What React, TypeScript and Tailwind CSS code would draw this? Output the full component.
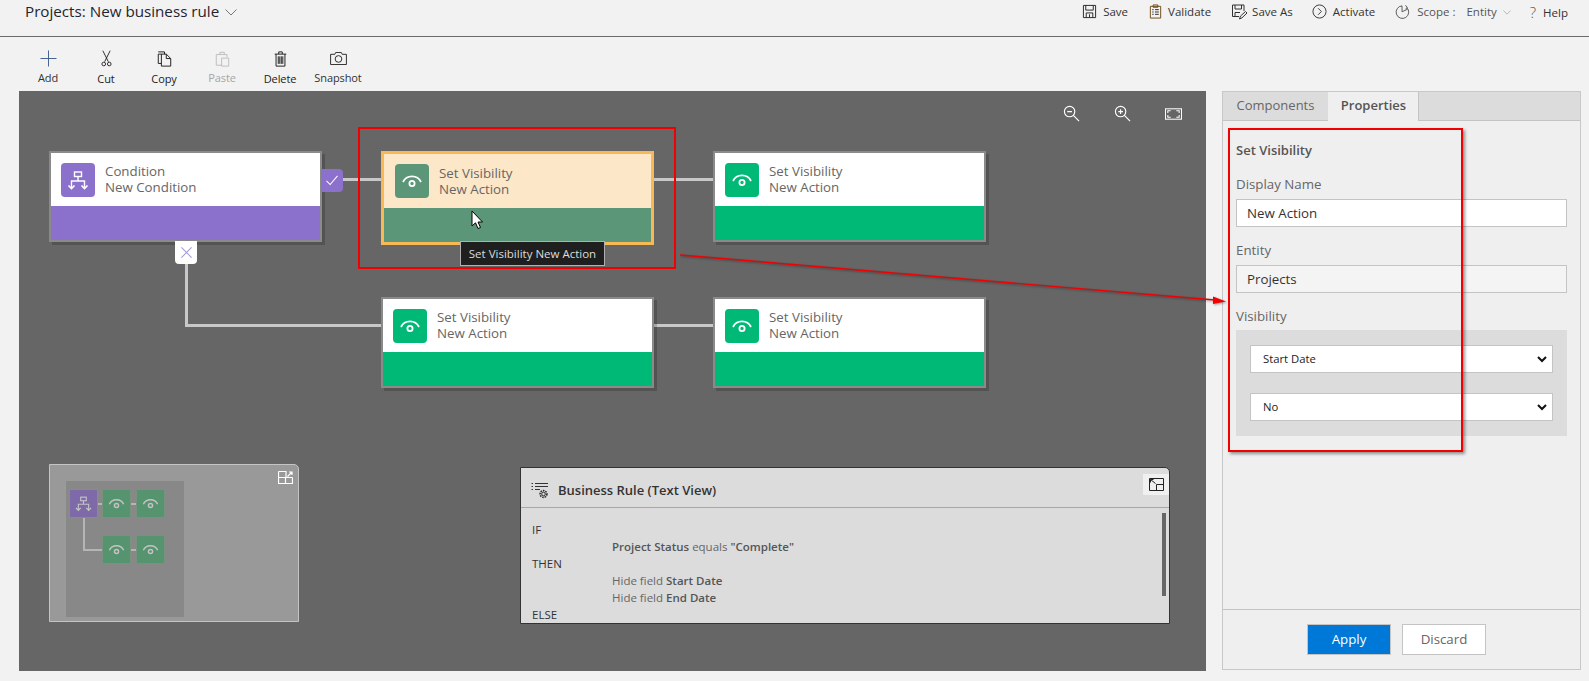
import * as React from "react";

const Eye: React.FC<{ className?: string }> = ({ className }) => (
  <svg viewBox="0 0 34 34" className={className} fill="none" stroke="currentColor" strokeWidth="1.8">
    <path d="M8 18 C11.5 10.5 22.5 10.5 26 18" />
    <circle cx="17" cy="19.5" r="2.6" />
  </svg>
);

const OrgIcon: React.FC<{ className?: string }> = ({ className }) => (
  <svg viewBox="0 0 34 34" className={className} fill="none" stroke="currentColor" strokeWidth="1.4">
    <rect x="13.5" y="9" width="7" height="4.5" />
    <path d="M17 13.5 V18 M10.5 25 V18 H23.5 V25" />
    <path d="M7.5 22.5 L10.5 25.5 L13.5 22.5 M20.5 22.5 L23.5 25.5 L26.5 22.5" strokeWidth="1.6" />
  </svg>
);

const SaveIcon = () => (
  <svg viewBox="0 0 16 16" className="w-[15px] h-[15px]" fill="none" stroke="#222" strokeWidth="1">
    <path d="M1.5 1.5 H14.5 V14.5 H1.5 Z M4 1.5 V6.5 H12 V1.5 M4.5 14.5 V9.5 H11.5 V14.5 M8 11 V14" />
  </svg>
);

const ValidateIcon = () => (
  <svg viewBox="0 0 16 16" className="w-[15px] h-[15px]" fill="none" stroke="#6b4a12" strokeWidth="1">
    <path d="M2.5 2.5 H13.5 V15 H2.5 Z M5.5 1 H10.5 V3.5 H5.5 Z" />
    <path d="M4.5 6 H6 M7.5 6 H11.5 M4.5 8.5 H6 M7.5 8.5 H11.5 M4.5 11 H6 M7.5 11 H11.5" stroke="#222" />
  </svg>
);

const SaveAsIcon = () => (
  <svg viewBox="0 0 17 16" className="w-[17px] h-[16px]" fill="none" stroke="#333" strokeWidth="1">
    <path d="M8 12.5 H1.5 V1 H13 V7 M4 1 V5 H10.5 V1 M4 12.5 V8.5 H9" />
    <path d="M8.5 15 L9.5 12 L14.5 7.5 L16 9 L11 13.8 Z" />
  </svg>
);

const ActivateIcon = () => (
  <svg viewBox="0 0 16 16" className="w-[15px] h-[15px]" fill="none" stroke="#333" strokeWidth="1">
    <circle cx="8" cy="8" r="7" />
    <path d="M6.5 4.5 L10 8 L6.5 11.5" />
  </svg>
);

const ScopeIcon = () => (
  <svg viewBox="0 0 16 16" className="w-[15px] h-[15px]" fill="none" stroke="#555" strokeWidth="1">
    <path d="M12.5 3.8 A6.7 6.7 0 1 1 7.5 2 V8.3 L13.5 5.5" />
    <path d="M11 1.5 L13.2 3.4 L11.3 5.6" />
  </svg>
);

const Chevron: React.FC<{ className: string; stroke?: string }> = ({ className, stroke = "#777" }) => (
  <svg viewBox="0 0 12 7" className={className} fill="none" stroke={stroke} strokeWidth="1">
    <path d="M0.5 0.5 L6 6 L11.5 0.5" />
  </svg>
);

const toolItems: { label: string; muted?: boolean; low?: boolean; icon: React.ReactNode }[] = [
  {
    label: "Add",
    icon: (
      <svg viewBox="0 0 18 18" className="w-[17px] h-[17px]" stroke="#3d5a8c" strokeWidth="1">
        <path d="M9 0.5 V17.5 M0.5 9 H17.5" />
      </svg>
    ),
  },
  {
    label: "Cut",
    low: true,
    icon: (
      <svg viewBox="0 0 12 18" className="w-[11px] h-[17px]" fill="none" stroke="#222" strokeWidth="1">
        <path d="M2 0.5 L8 12.5 M10 0.5 L4 12.5" />
        <circle cx="3" cy="15" r="2" />
        <circle cx="9" cy="15" r="2" />
      </svg>
    ),
  },
  {
    label: "Copy",
    low: true,
    icon: (
      <svg viewBox="0 0 16 18" className="w-[15px] h-[16px]" fill="none" stroke="#222" strokeWidth="1.1">
        <path d="M4.5 3.5 H1 V14 H4.5" />
        <path d="M1 1 H8 V3.5 M4.5 3.5 H10 L15 8.5 V17 H4.5 Z M10 3.5 V8.5 H15" />
      </svg>
    ),
  },
  {
    label: "Paste",
    muted: true,
    icon: (
      <svg viewBox="0 0 16 18" className="w-[15px] h-[16px]" fill="none" stroke="#bdbdbd" strokeWidth="1.1">
        <path d="M5 4 H1 V16 H7 M5 1.5 H10 V4 H5 Z M10 4 H13 V7 M7 8 H15 V17 H7 Z" />
      </svg>
    ),
  },
  {
    label: "Delete",
    low: true,
    icon: (
      <svg viewBox="0 0 14 18" className="w-[13px] h-[16px]" fill="none" stroke="#222" strokeWidth="1.1">
        <path d="M0.5 3.5 H13.5 M5 3.5 V1 H9 V3.5 M2 3.5 V17 H12 V3.5 M4.5 6 V14.5 M6.2 6 V14.5 M7.9 6 V14.5 M9.6 6 V14.5" />
      </svg>
    ),
  },
  {
    label: "Snapshot",
    icon: (
      <svg viewBox="0 0 18 14" className="w-[17px] h-[13px]" fill="none" stroke="#222" strokeWidth="1">
        <path d="M0.5 2.5 H5 L6 0.5 H12 L13 2.5 H17.5 V13.5 H0.5 Z" />
        <circle cx="9" cy="7.5" r="3.6" />
      </svg>
    ),
  },
];

const Toolbar: React.FC = () => (
  <div className="flex h-[54px] pl-[19px] pt-[12px]">
    {toolItems.map((t) => (
      <div key={t.label} className="w-[58px] flex flex-col items-center">
        <div className="h-[19px] flex items-center justify-center">{t.icon}</div>
        <span
          className={`text-[11px] leading-[16px] tracking-[-0.01em] whitespace-nowrap ${t.low ? "mt-[3px] text-[#222]" : "mt-[2px]"} ${
            t.muted ? "text-[#a6a6a6]" : t.low ? "" : "text-[#333]"
          }`}
        >
          {t.label}
        </span>
      </div>
    ))}
  </div>
);

const Header: React.FC = () => (
  <header className="h-[37px] border-b border-[#6b6b6b] flex items-start pl-[25px] pr-[21px]">
    <h1 className="text-[15.2px] leading-[23px] font-medium text-[#1f2430] whitespace-nowrap">Projects: New business rule</h1>
    <Chevron className="w-[12px] h-[7px] ml-[6px] mt-[9px]" />
    <div className="ml-auto flex items-center h-[23px] text-[11.5px] text-[#333] whitespace-nowrap">
      <SaveIcon />
      <span className="ml-[6px]">Save</span>
      <span className="ml-[20px]"><ValidateIcon /></span>
      <span className="ml-[5px]">Validate</span>
      <span className="ml-[20px]"><SaveAsIcon /></span>
      <span className="ml-[4px]">Save As</span>
      <span className="ml-[19px]"><ActivateIcon /></span>
      <span className="ml-[6px]">Activate</span>
      <span className="ml-[20px]"><ScopeIcon /></span>
      <span className="ml-[7px] text-[#555]">Scope :</span>
      <span className="ml-[11px] text-[#555]">Entity</span>
      <Chevron className="w-[8px] h-[5px] ml-[6px] mt-[2px]" stroke="#999" />
      <span className="ml-[19px] text-[15px] font-light text-[#555] leading-[16px]">?</span>
      <span className="ml-[7px] mt-[2px]">Help</span>
    </div>
  </header>
);

const ActionNode: React.FC<{ className: string }> = ({ className }) => (
  <div className={`absolute w-[273px] h-[91px] border-2 border-[#8a8a8a] bg-white flex flex-col shadow-[3px_3px_0_rgba(0,0,0,0.18)] ${className}`}>
    <div className="h-[53px] flex items-center gap-[10px] pl-[10px]">
      <div className="w-[34px] h-[34px] rounded-[4px] bg-[#00b976] text-white flex items-center justify-center">
        <Eye className="w-[34px] h-[34px]" />
      </div>
      <div className="text-[13.3px] leading-[16px] text-[#666] -mt-[2px]">
        <div>Set Visibility</div>
        <div>New Action</div>
      </div>
    </div>
    <div className="flex-1 bg-[#00b976]" />
  </div>
);

const Canvas: React.FC = () => (
  <div className="relative w-[1187px] h-[580px] bg-[#666666] shrink-0">
    {/* zoom controls */}
    <svg viewBox="0 0 18 18" className="absolute left-[1044px] top-[14px] w-[17px] h-[17px]" fill="none" stroke="#fff" strokeWidth="1.2">
      <circle cx="7" cy="7" r="5.5" />
      <path d="M4.5 7 H9.5 M11 11 L17 17" />
    </svg>
    <svg viewBox="0 0 18 18" className="absolute left-[1095px] top-[14px] w-[17px] h-[17px]" fill="none" stroke="#fff" strokeWidth="1.2">
      <circle cx="7" cy="7" r="5.5" />
      <path d="M4.5 7 H9.5 M7 4.5 V9.5 M11 11 L17 17" />
    </svg>
    <svg viewBox="0 0 18 12" className="absolute left-[1146px] top-[17px] w-[17px] h-[12px]" fill="none" stroke="#fff" strokeWidth="1.1">
      <rect x="0.5" y="0.5" width="17" height="11" />
      <path d="M3 5 V2.5 H6 M12 2.5 H15 V5 M3 7 V9.5 H6 M12 9.5 H15 V7" />
    </svg>

    {/* connectors */}
    <div className="absolute left-[324px] top-[87px] w-[38px] h-[3px] bg-[#c8c8c8]" />
    <div className="absolute left-[635px] top-[87px] w-[59px] h-[3px] bg-[#c8c8c8]" />
    <div className="absolute left-[166px] top-[173px] w-[3px] h-[63px] bg-[#c8c8c8]" />
    <div className="absolute left-[166px] top-[233px] w-[196px] h-[3px] bg-[#c8c8c8]" />
    <div className="absolute left-[635px] top-[233px] w-[59px] h-[3px] bg-[#c8c8c8]" />

    {/* condition */}
    <div className="absolute left-[30px] top-[60px] w-[273px] h-[91px] border-2 border-[#8a8a8a] bg-white flex flex-col shadow-[3px_3px_0_rgba(0,0,0,0.18)]">
      <div className="h-[53px] flex items-center gap-[10px] pl-[10px]">
        <div className="w-[34px] h-[34px] rounded-[4px] bg-[#8b71cb] text-white">
          <OrgIcon className="w-[34px] h-[34px]" />
        </div>
        <div className="text-[13.3px] leading-[16px] text-[#666] -mt-[2px]">
          <div>Condition</div>
          <div>New Condition</div>
        </div>
      </div>
      <div className="flex-1 bg-[#8b71cb]" />
    </div>
    <div className="absolute left-[302px] top-[78px] w-[22px] h-[23px] bg-[#8b71cb] rounded-r-[4px] flex items-center justify-center">
      <svg viewBox="0 0 14 12" className="w-[14px] h-[11px]" fill="none" stroke="#fff" strokeWidth="1.1">
        <path d="M1 6.5 L5 10.5 L13 1" />
      </svg>
    </div>
    <div className="absolute left-[156px] top-[150px] w-[22px] h-[23px] bg-white rounded-b-[4px] flex items-center justify-center">
      <svg viewBox="0 0 12 12" className="w-[11px] h-[11px]" fill="none" stroke="#a596d8" strokeWidth="1.1">
        <path d="M0.5 0.5 L11.5 11.5 M11.5 0.5 L0.5 11.5" />
      </svg>
    </div>

    {/* selected action */}
    <div className="absolute left-[362px] top-[60px] w-[273px] h-[94px] border-[3px] border-[#f7b955] bg-[#fde7c9] flex flex-col">
      <div className="h-[54px] flex items-center gap-[10px] pl-[11px]">
        <div className="w-[34px] h-[34px] rounded-[4px] bg-[#5c9679] text-white">
          <Eye className="w-[34px] h-[34px]" />
        </div>
        <div className="text-[13.3px] leading-[16px] text-[#666] -mt-[1px]">
          <div>Set Visibility</div>
          <div>New Action</div>
        </div>
      </div>
      <div className="flex-1 bg-[#5c9679]" />
    </div>

    <ActionNode className="left-[694px] top-[60px]" />
    <ActionNode className="left-[362px] top-[206px]" />
    <ActionNode className="left-[694px] top-[206px]" />

    {/* hover tooltip + pointer */}
    <div className="absolute left-[441px] top-[150px] w-[145px] h-[25px] bg-[#1f1f1f] border border-[#b0b0b0] text-[#dcdcdc] text-[11.5px] flex items-center justify-center whitespace-nowrap">
      Set Visibility New Action
    </div>
    <svg viewBox="0 0 13 20" className="absolute left-[452px] top-[119px] w-[13px] h-[20px]" fill="#fff" stroke="#000" strokeWidth="1">
      <path d="M1 1 V16 L4.5 12.8 L7 18.5 L9.5 17.5 L7 12 H11.5 Z" />
    </svg>

    <div className="absolute left-[339px] top-[36px] w-[318px] h-[142px] border-2 border-[#f00000]" />

    {/* mini map */}
    <div className="absolute left-[30px] top-[373px] w-[250px] h-[158px] bg-[#999999] border border-[#c4c4c4] rounded-tr-[5px]">
      <svg viewBox="0 0 15 13" className="absolute left-[228px] top-[6px] w-[15px] h-[13px]" fill="none" stroke="#fff" strokeWidth="1.2">
        <path d="M0.5 0.5 H8 V6.5 M14.5 6.5 V12.5 H0.5 V0.5 M0.5 6.5 H14.5 M7.5 6.5 V12.5 M9.5 5.5 L14 1 M11 1 H14 V4" />
      </svg>
      <div className="absolute left-[16px] top-[16px] w-[118px] h-[136px] bg-[#888888]">
        <div className="absolute left-[30px] top-[22px] w-[60px] h-[2px] bg-[#b5b5b5]" />
        <div className="absolute left-[17px] top-[37px] w-[2px] h-[33px] bg-[#b5b5b5]" />
        <div className="absolute left-[17px] top-[68px] w-[80px] h-[2px] bg-[#b5b5b5]" />
        <div className="absolute left-[3px] top-[8px] w-[29px] h-[29px] bg-[#7e6aa9] text-[#c4c4c4] border border-[#8a8a8a]">
          <OrgIcon className="w-full h-full" />
        </div>
        {["left-[36px] top-[8px]", "left-[70px] top-[8px]", "left-[36px] top-[54px]", "left-[70px] top-[54px]"].map((pos) => (
          <div key={pos} className={`absolute ${pos} w-[29px] h-[29px] bg-[#56936f] text-[#c4c4c4] border border-[#7b917f]`}>
            <Eye className="w-full h-full" />
          </div>
        ))}
      </div>
    </div>

    {/* text view */}
    <div className="absolute left-[501px] top-[376px] w-[650px] h-[157px] bg-[#dcdcdc] border border-[#333] rounded-tr-[5px] overflow-hidden flex flex-col">
      <div className="h-[40px] border-b border-[#a8a8a8] flex items-center pl-[10px] pt-[6px] gap-[9px] shrink-0">
        <svg viewBox="0 0 18 17" className="w-[18px] h-[17px]" fill="none" stroke="#333" strokeWidth="1">
          <path d="M0.5 1.5 H2 M4 1.5 H17 M0.5 4.5 H2 M4 4.5 H17 M0.5 7.5 H2 M4 7.5 H9" />
          <circle cx="12.5" cy="12" r="3.4" strokeWidth="1.6" strokeDasharray="1.6 0.9" />
          <circle cx="12.5" cy="12" r="1.8" />
        </svg>
        <span className="text-[13px] font-semibold text-[#333]">Business Rule (Text View)</span>
      </div>
      <div className="absolute left-[622px] top-[6px] w-[27px] h-[21px] bg-[#f0f0f0] flex items-center justify-center">
        <svg viewBox="0 0 15 13" className="w-[15px] h-[13px]" fill="none" stroke="#222" strokeWidth="1">
          <path d="M0.5 0.5 H14.5 V12.5 H0.5 Z M7.5 6.5 H14.5 M7.5 6.5 V12.5 M6.5 5.5 L1.5 1.5 M1.5 4.5 V1.5 H4.5" />
        </svg>
      </div>
      <div className="absolute left-[641px] top-[45px] w-[4px] h-[83px] bg-[#666]" />
      <div className="pl-[11px] pt-[13px] text-[11.5px] leading-[17px] text-[#444]">
        <div className="text-[#333]">IF</div>
        <div className="pl-[80px] text-[#666]">
          <b className="font-semibold text-[#555]">Project Status</b> equals <b className="font-semibold text-[#555]">"Complete"</b>
        </div>
        <div className="text-[#333]">THEN</div>
        <div className="pl-[80px] text-[#666]">
          Hide field <b className="font-semibold text-[#555]">Start Date</b>
        </div>
        <div className="pl-[80px] text-[#666]">
          Hide field <b className="font-semibold text-[#555]">End Date</b>
        </div>
        <div className="text-[#333]">ELSE</div>
      </div>
    </div>
  </div>
);

const SelectBox: React.FC<{ text: string }> = ({ text }) => (
  <div className="h-[28px] bg-white border border-[#c4c4c4] flex items-center pl-[12px] pr-[5px] text-[11.3px] text-[#222]">
    <span>{text}</span>
    <svg viewBox="0 0 10 7" className="ml-auto w-[10px] h-[7px]" fill="none" stroke="#111" strokeWidth="2">
      <path d="M1 1 L5 5 L9 1" />
    </svg>
  </div>
);

const PropertiesPanel: React.FC = () => (
  <aside className="w-[359px] h-[579px] border border-[#c8c8c8] bg-[#efefef] flex flex-col shrink-0">
    <div className="h-[29px] bg-[#dcdcdc] border-b border-[#c4c4c4] flex text-[13px] shrink-0">
      <div className="w-[105px] flex items-center justify-center pb-[1px] text-[#666]">Components</div>
      <div className="w-[91px] h-[29px] bg-[#efefef] border-r border-[#c4c4c4] flex items-center justify-center pb-[1px] pl-[1px] font-semibold text-[#555]">
        Properties
      </div>
    </div>
    <div className="flex-1 px-[13px]">
      <div className="mt-[20px] text-[13px] leading-[18px] font-semibold text-[#555]">Set Visibility</div>
      <label className="block mt-[16px] text-[13.3px] leading-[18px] text-[#666]">Display Name</label>
      <div className="mt-[6px] h-[28px] bg-white border border-[#c4c4c4] flex items-center pl-[10px] pt-[1px] text-[13.3px] text-[#333]">New Action</div>
      <label className="block mt-[14px] text-[13.3px] leading-[18px] text-[#666]">Entity</label>
      <div className="mt-[6px] h-[28px] bg-[#f4f4f4] border border-[#c4c4c4] flex items-center pl-[10px] pt-[1px] text-[13.3px] text-[#333]">Projects</div>
      <label className="block mt-[14px] text-[13.3px] leading-[18px] text-[#666]">Visibility</label>
      <div className="mt-[5px] h-[106px] bg-[#dcdcdc] px-[14px] pt-[15px] flex flex-col gap-[20px]">
        <SelectBox text="Start Date" />
        <SelectBox text="No" />
      </div>
    </div>
    <div className="h-[60px] border-t border-[#c4c4c4] flex justify-center items-start pt-[14px] gap-[11px] pr-[10px] shrink-0">
      <button className="w-[84px] h-[31px] bg-[#0078d7] border border-[#c4c4c4] text-white text-[13.3px]">Apply</button>
      <button className="w-[84px] h-[31px] bg-white border border-[#c4c4c4] text-[#666] text-[13.3px]">Discard</button>
    </div>
  </aside>
);

export default function App() {
  return (
    <div className="relative h-[681px] overflow-hidden bg-[#f2f2f2] font-['Open_Sans',sans-serif]">
      <Header />
      <Toolbar />
      <main className="flex gap-[16px] pl-[19px]">
        <Canvas />
        <PropertiesPanel />
      </main>
      {/* annotation over the panel */}
      <div className="absolute left-[1228px] top-[128px] w-[235px] h-[324px] border-2 border-[#f00000] shadow-[2px_2px_3px_rgba(0,0,0,0.4)]" />
      <svg viewBox="0 0 1589 681" className="absolute left-0 top-0 w-[1589px] h-[681px] pointer-events-none drop-shadow-[1px_1px_1px_rgba(0,0,0,0.35)]" fill="none">
        <path d="M680 255 L1215 300" stroke="#f00000" strokeWidth="1.4" />
        <path d="M1226 301.5 L1213 296.5 L1213 304 Z" fill="#f00000" />
      </svg>
    </div>
  );
}
